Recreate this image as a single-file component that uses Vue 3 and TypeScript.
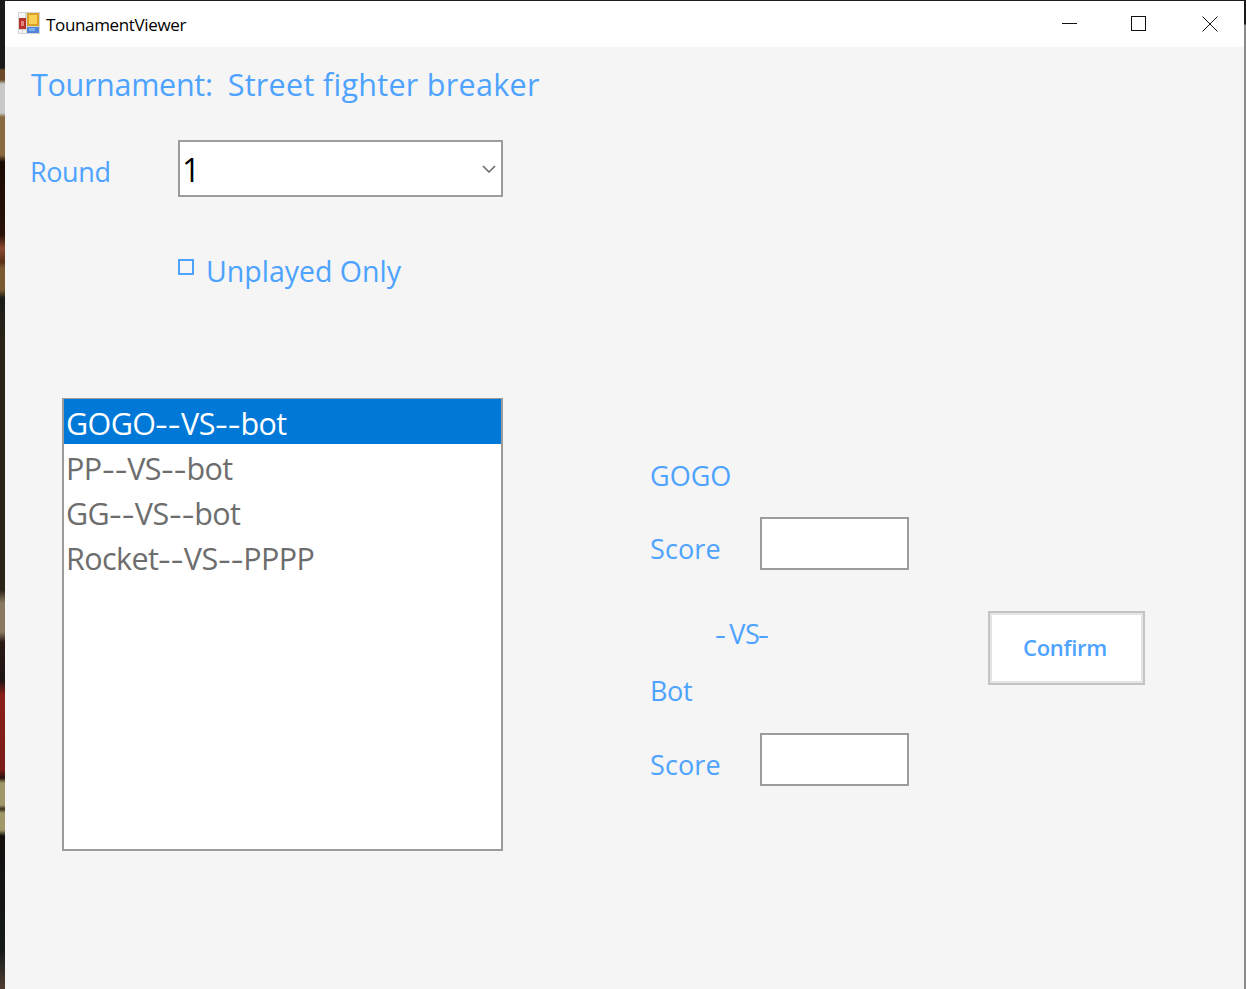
<script setup lang="ts">
const matches: string[] = ['GOGO--VS--bot', 'PP--VS--bot', 'GG--VS--bot', 'Rocket--VS--PPPP']
const parts = (m: string): string[] => m.split(/(--)/)
</script>

<template>
  <div class="screen">
    <div class="wall-left"></div>
    <div class="window">
      <header class="titlebar">
        <svg class="app-icon" width="22" height="22" viewBox="0 0 22 22">
          <rect x="0" y="0" width="22" height="22" fill="#d4d4d4" />
          <rect x="1" y="1" width="6" height="5" fill="#f6f6f6" />
          <rect x="1" y="6" width="7" height="11" fill="#b8322c" />
          <rect x="3" y="9" width="3" height="5" fill="#e0847c" />
          <rect x="1" y="18" width="3" height="3" fill="#f6f6f6" />
          <rect x="5" y="18" width="3" height="3" fill="#f6f6f6" />
          <rect x="9" y="1" width="12" height="13" fill="#d9a227" />
          <rect x="11" y="3" width="8" height="9" fill="#fbd057" />
          <rect x="9" y="15" width="12" height="6" fill="#4f86d8" />
          <rect x="11" y="16" width="6" height="3" fill="#7fb0ee" />
        </svg>
        <span class="app-title">TounamentViewer</span>
        <div class="controls">
          <svg class="ctl" width="16" height="16" viewBox="0 0 16 16"><path d="M0 7.5H15" stroke="#111" stroke-width="1" fill="none" /></svg>
          <svg class="ctl" width="16" height="16" viewBox="0 0 16 16"><rect x="0.5" y="0.5" width="14" height="14" stroke="#111" stroke-width="1" fill="none" /></svg>
          <svg class="ctl" width="16" height="16" viewBox="0 0 16 16"><path d="M0.5 0.5L15.5 15.5M15.5 0.5L0.5 15.5" stroke="#111" stroke-width="1" fill="none" /></svg>
        </div>
      </header>

      <main class="body">
        <h1 class="heading"><span class="head-a">Tournament:</span><span class="head-b">Street fighter breaker</span></h1>

        <div class="round-row">
          <span class="label round-label">Round</span>
          <div class="select">
            <span class="select-value">1</span>
            <svg width="14" height="8" viewBox="0 0 14 8"><path d="M1 1L7 7L13 1" stroke="#666" stroke-width="1.5" fill="none" /></svg>
          </div>
        </div>

        <div class="check-row">
          <span class="checkbox"></span>
          <span class="label unplayed">Unplayed Only</span>
        </div>

        <div class="columns">
          <ul class="list">
            <li v-for="(m, i) in matches" :key="m" class="item" :class="{ selected: i === 0 }">
              <span v-for="(p, j) in parts(m)" :key="j" :class="{ dash: p === '--' }">{{ p }}</span>
            </li>
          </ul>

          <section class="scores">
            <div class="score-col">
              <div class="label line name1">GOGO</div>
              <div class="score-row first">
                <span class="label score-label">Score</span>
                <div class="input"></div>
              </div>
              <div class="label line vs"><span class="dash-vs">-</span>VS<span class="dash-vs">-</span></div>
              <div class="label line name2">Bot</div>
              <div class="score-row second">
                <span class="label score-label">Score</span>
                <div class="input"></div>
              </div>
            </div>
            <button class="confirm">Confirm</button>
          </section>
        </div>
      </main>
    </div>
    <div class="wall-right"></div>
  </div>
</template>

<style>
html, body { margin: 0; background: #f5f5f5; }
</style>

<style scoped>
.screen {
  display: flex;
  width: 1246px;
  height: 989px;
  overflow: hidden;
  font-family: "Open Sans", "Noto Sans", sans-serif;
}
.wall-left {
  width: 5px;
  flex: none;
  background: linear-gradient(180deg,
    #1a1a1a 0, #1a1a1a 68px, #6b4a2a 70px, #6b4a2a 80px, #c8c8c8 84px, #c8c8c8 113px,
    #8a6a40 117px, #8a6a40 155px, #1a0a04 162px, #2a1208 235px, #8a4a30 248px, #5a3018 262px,
    #7a5a30 268px, #7a5a30 290px, #1c1c18 298px, #2a2418 340px, #2a2418 590px, #8a7a60 603px,
    #8a7a60 632px, #2a1a14 642px, #1c1414 680px, #8a1f1a 695px, #7a1c18 770px, #2a1410 778px,
    #a09868 783px, #a09868 805px, #3a3020 809px, #a09868 813px, #a09868 830px, #14100e 836px,
    #141a1a 950px, #4a3a30 985px);
}
.wall-right {
  width: 2px;
  flex: none;
  background: linear-gradient(180deg, #1a1a1a 0, #1a1a1a 24px, #8a8a8a 25px, #8a8a8a 989px);
}
.window {
  flex: 1;
  display: flex;
  flex-direction: column;
  background: #f5f5f5;
  border-top: 1px solid #1c1c1c;
}
.titlebar {
  height: 46px;
  flex: none;
  display: flex;
  align-items: center;
  padding-left: 13px;
  background: #fff;
  box-sizing: border-box;
}
.app-icon { margin-top: -2px; }
.app-title {
  margin-left: 6px;
  margin-top: 1px;
  font-size: 17px;
  letter-spacing: -0.35px;
  color: #000;
}
.controls {
  margin-left: auto;
  margin-right: 26px;
  display: flex;
}
.ctl { display: block; }
.ctl:nth-child(2) { margin-left: 53px; }
.ctl:nth-child(3) { margin-left: 55px; }
.body {
  flex: 1;
  padding: 0 0 0 26px;
  color: #4da3ff;
}
.heading {
  margin: 17px 0 0;
  height: 41px;
  display: flex;
  font-size: 30.5px;
  line-height: 40px;
  font-weight: 400;
  color: #4da3ff;
  white-space: nowrap;
}
.head-a { letter-spacing: -0.3px; }
.head-b { margin-left: 15px; letter-spacing: 0.3px; }
.label {
  font-size: 27px;
  line-height: 36px;
  letter-spacing: -0.4px;
  color: #4da3ff;
  white-space: nowrap;
}
.round-row {
  margin-top: 35px;
  display: flex;
  align-items: flex-start;
}
.round-label { width: 147px; margin-top: 14px; text-indent: -1px; }
.select {
  width: 325px;
  height: 57px;
  box-sizing: border-box;
  border: 2px solid #9c9c9c;
  background: #fff;
  display: flex;
  align-items: center;
  justify-content: space-between;
  padding: 0 5px 0 2px;
}
.select-value { font-size: 32px; color: #000; margin-top: 1px; }
.check-row {
  margin: 56px 0 0 147px;
  height: 36px;
  display: flex;
  align-items: center;
  gap: 12px;
}
.checkbox {
  width: 16px;
  height: 16px;
  box-sizing: border-box;
  margin-top: -9px;
  border: 2px solid #4da3ff;
  background: #f5f5f5;
}
.unplayed { font-size: 28.5px; letter-spacing: 0; margin-top: -1px; }
.columns {
  margin: 109px 0 0 31px;
  display: flex;
  align-items: flex-start;
}
.list {
  list-style: none;
  margin: 0;
  padding: 0;
  width: 441px;
  height: 453px;
  box-sizing: border-box;
  border: 2px solid #9c9c9c;
  background: #fff;
  flex: none;
}
.item {
  height: 45px;
  line-height: 49px;
  padding-left: 2px;
  font-size: 30.5px;
  letter-spacing: -0.6px;
  color: #6d6d6d;
  white-space: nowrap;
  position: relative;
  top: -1px;
}
.dash {
  display: inline-block;
  letter-spacing: 0;
  margin-right: 6px;
  transform: scaleX(1.3);
  transform-origin: left center;
}
.selected { background: #0078d7; color: #fff; }
.scores {
  margin: 58px 0 0 148px;
  display: flex;
  align-items: flex-start;
}
.score-col { width: 337px; flex: none; }
.line { height: 36px; text-indent: -1px; }
.name1 { margin-top: 2px; letter-spacing: 0; }
.score-row {
  display: flex;
  align-items: flex-end;
}
.score-label { width: 109px; margin-bottom: 3px; text-indent: -1px; letter-spacing: 0.1px; }
.first { margin-top: 23px; }
.second { margin-top: 24px; }
.input {
  width: 149px;
  height: 53px;
  box-sizing: border-box;
  border: 2px solid #9c9c9c;
  background: #fff;
}
.vs { margin: 46px 0 0 66px; }
.dash-vs {
  display: inline-block;
  letter-spacing: 0;
  margin-right: 5.5px;
  transform: scaleX(1.3);
  transform-origin: left center;
}
.name2 { margin-top: 21px; }
.confirm {
  width: 157px;
  height: 74px;
  margin-top: 155px;
  box-sizing: border-box;
  border: 2px solid #c4c4c4;
  box-shadow: inset 0 0 0 2px #e4e4e4;
  outline: none;
  background: #fff;
  font-family: inherit;
  font-size: 22px;
  font-weight: 600;
  letter-spacing: -0.3px;
  color: #4da3ff;
  padding: 0 3px 2px 0;
}
</style>
